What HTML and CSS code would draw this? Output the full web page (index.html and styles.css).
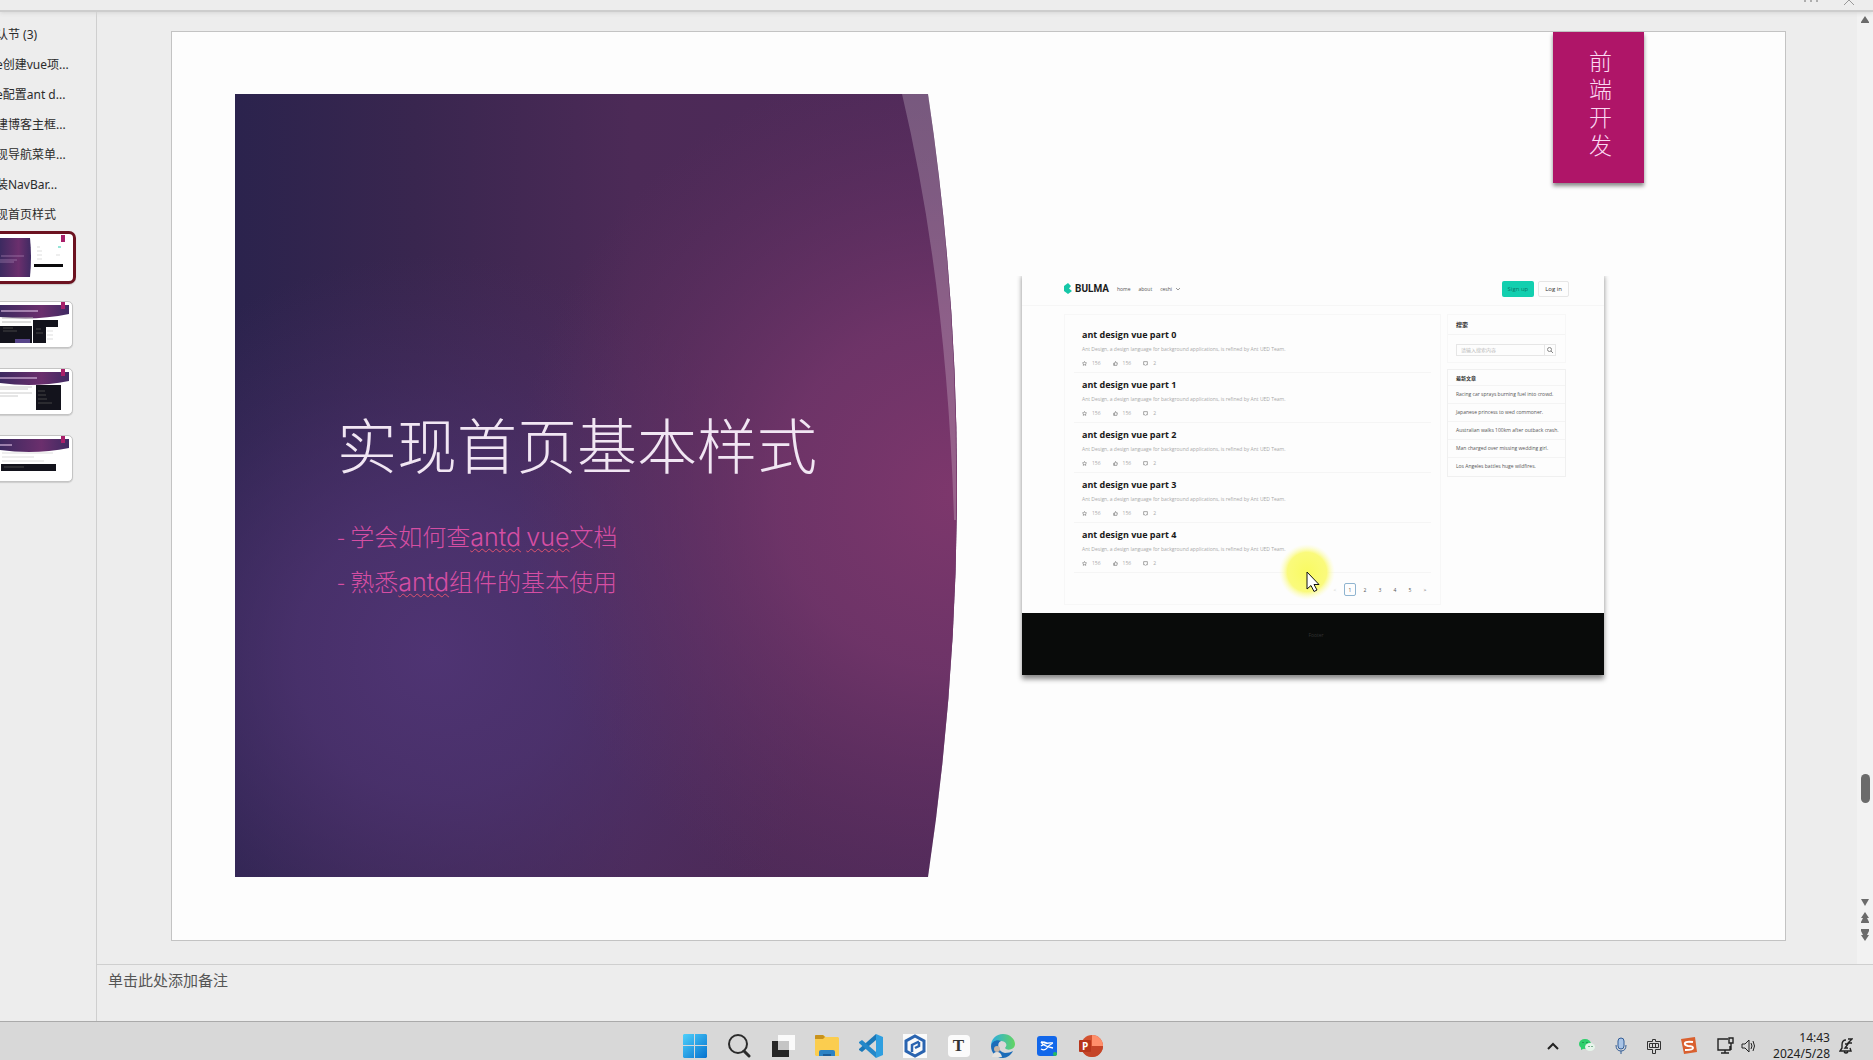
FILE: index.html
```html
<!DOCTYPE html>
<html lang="zh-CN">
<head>
  <meta charset="UTF-8" />
  <meta name="viewport" content="width=device-width, initial-scale=1.0"/>
  <title>实现首页基本样式</title>
  <link rel="stylesheet" href="styles.css">
</head>
<body>
  <svg class="defs" width="0" height="0">
    <defs>
      <symbol id="star" viewBox="0 0 16 16"><path d="M8 1.500l2 4.200 4.500.6-3.300 3.200.8 4.500L8 11.900 4 14l.8-4.500L1.500 6.300 6 5.700z" fill="none" stroke="#777" stroke-width="2"/></symbol>
      <symbol id="like" viewBox="0 0 16 16"><path d="M2 7h3v7H2zM5 7l3-5.500c2 0 2 2 1.300 4.500H14l-1.500 8H5" fill="none" stroke="#777" stroke-width="2"/></symbol>
      <symbol id="msg" viewBox="0 0 16 16"><path d="M2 2h12v10h-4l-2 2-2-2H2z" fill="none" stroke="#777" stroke-width="2"/></symbol>
      <linearGradient id="bar" x1="0" x2="1"><stop offset="0" stop-color="#3c2a60"/><stop offset=".6" stop-color="#6b2f6d"/><stop offset="1" stop-color="#3f2a62"/></linearGradient>
    </defs>
  </svg>

  <div class="titlebar">
    <button class="tool" aria-label="更多"><svg width="16" height="4" viewBox="0 0 16 4" fill="#999"><circle cx="2" cy="1" r="1"/><circle cx="8" cy="1" r="1"/><circle cx="14" cy="1" r="1"/></svg></button>
    <button class="tool" aria-label="关闭"><svg width="12" height="12" viewBox="0 0 12 12" stroke="#999"><path d="M1 1l10 10M11 1L1 11"/></svg></button>
  </div>

  <div class="workspace">
    <aside class="sidebar">
      <ul class="sections">
        <li>认节 (3)</li>
        <li>e创建vue项...</li>
        <li>e配置ant d...</li>
        <li>建博客主框...</li>
        <li>现导航菜单...</li>
        <li>装NavBar...</li>
        <li>现首页样式</li>
      </ul>
      <button class="thumb selected" aria-label="实现首页基本样式">
        <svg width="73" height="47" viewBox="0 0 73 47">
          <path d="M0 4h30q2 19 0 39H0z" fill="url(#bar)"/>
          <path d="M1 22h23M0 26h17M0 28h14" stroke="#b48fc0" stroke-opacity=".6"/>
          <rect x="34" y="30" width="29" height="3" fill="#0a0a0c"/>
          <path d="M37 13h3M37 17h5M37 21h5M37 25h5M56 21h4" stroke="#ddd"/>
          <path d="M58 13h3" stroke="#2cc9b0"/>
          <rect x="61" y="1" width="4" height="7" fill="#a8206a"/>
        </svg>
      </button>
      <button class="thumb" aria-label="幻灯片 2">
        <svg width="72" height="45" viewBox="0 0 72 45">
          <path d="M0 3h69v9q-34 7-69 3z" fill="url(#bar)"/>
          <path d="M1 9h37" stroke="#d5b8dc" stroke-opacity=".6" stroke-width="2"/>
          <path d="M2 16h31M2 20h29" stroke="#bbb"/>
          <path d="M0 24h32v17H0zM33 18h25v7H46v16H33z" fill="#13131c"/>
          <path d="M3 26h10M3 29h14M36 27h5M36 31h7" stroke="#444"/>
          <rect x="15" y="37" width="15" height="4" fill="#57458a"/>
          <path d="M47 29h6M47 33h6M47 37h6" stroke="#ddd"/>
          <rect x="61" y="0" width="4" height="7" fill="#a8206a"/>
        </svg>
      </button>
      <button class="thumb" aria-label="幻灯片 3">
        <svg width="72" height="45" viewBox="0 0 72 45">
          <path d="M0 3h69v9q-34 7-69 2z" fill="url(#bar)"/>
          <path d="M0 9h37" stroke="#d5b8dc" stroke-opacity=".6" stroke-width="2"/>
          <path d="M0 18h32M0 20h28M0 24h32M0 27h18" stroke="#ccc"/>
          <rect x="36" y="16" width="25" height="25" fill="#13131c"/>
          <path d="M38 22h7M38 26h8M38 30h9M38 34h14" stroke="#444"/>
          <rect x="61" y="0" width="4" height="7" fill="#a8206a"/>
        </svg>
      </button>
      <button class="thumb" aria-label="幻灯片 4">
        <svg width="72" height="45" viewBox="0 0 72 45">
          <path d="M0 3h69v9q-34 7-69 2z" fill="url(#bar)"/>
          <path d="M0 9h12" stroke="#d5b8dc" stroke-opacity=".6" stroke-width="2"/>
          <path d="M2 17h51M2 21h32M2 25h42" stroke="#ddd"/>
          <rect x="1" y="28" width="55" height="7" fill="#13131c"/>
          <path d="M4 31h20" stroke="#444"/>
          <rect x="61" y="0" width="4" height="7" fill="#a8206a"/>
        </svg>
      </button>
    </aside>

    <main class="editor">
      <div class="stage">
        <div class="slide">
          <section class="cover">
            <svg class="cover-bg" viewBox="0 0 722 783" preserveAspectRatio="none">
              <defs>
                <linearGradient id="base" x1="0" y1="0" x2="1" y2="0">
                  <stop offset="0" stop-color="#2b234d"/><stop offset=".25" stop-color="#39264f"/>
                  <stop offset=".55" stop-color="#4c2a57"/><stop offset="1" stop-color="#502a5a"/>
                </linearGradient>
                <radialGradient id="pink" gradientUnits="userSpaceOnUse" cx="720" cy="400" r="440">
                  <stop offset="0" stop-color="#7d376c"/><stop offset=".4" stop-color="#75366b" stop-opacity=".8"/><stop offset=".7" stop-color="#6c3366" stop-opacity=".4"/><stop offset="1" stop-color="#63305f" stop-opacity="0"/>
                </radialGradient>
                <radialGradient id="violet" gradientUnits="userSpaceOnUse" cx="200" cy="560" r="400">
                  <stop offset="0" stop-color="#4f3473"/><stop offset=".35" stop-color="#4d3371" stop-opacity=".8"/><stop offset=".7" stop-color="#4d3270" stop-opacity=".3"/><stop offset="1" stop-color="#4a2f68" stop-opacity="0"/>
                </radialGradient>
              </defs>
              <path d="M0 0H693Q751 391 693 783H0z" fill="url(#base)"/>
              <path d="M0 0H693Q751 391 693 783H0z" fill="url(#violet)"/>
              <path d="M0 0H693Q751 391 693 783H0z" fill="url(#pink)"/>
              <path d="M667 0H693Q724 213 721 426H719Q712 190 667 0z" fill="#fff" fill-opacity=".22"/>
            </svg>
            <h1>实现首页基本样式</h1>
            <p>- 学会如何查<span class="latin typo">antd</span> <span class="latin typo">vue</span>文档</p>
            <p>- 熟悉<span class="latin typo">antd</span>组件的基本使用</p>
          </section>

          <section class="preview">
            <nav class="navbar">
              <a class="brand" href="#"><svg width="8" height="11" viewBox="0 0 8 11"><path d="M4 0l3 3-2 2.500L8 8l-4 3-4-3V3z" fill="#16c7a8"/></svg>BULMA</a>
              <a href="#">home</a>
              <a href="#">about</a>
              <a href="#">ceshi <svg width="6" height="4" viewBox="0 0 6 4" fill="none" stroke="#999"><path d="M1 1l2 2 2-2"/></svg></a>
              <button class="signup">Sign up</button>
              <button class="login">Log in</button>
            </nav>
            <div class="content">
              <div class="posts">
                <article><h2>ant design vue part 0</h2><p>Ant Design, a design language for background applications, is refined by Ant UED Team.</p>
                  <div class="stats"><span><svg><use href="#star"/></svg>156</span><span><svg><use href="#like"/></svg>156</span><span><svg><use href="#msg"/></svg>2</span></div></article>
                <article><h2>ant design vue part 1</h2><p>Ant Design, a design language for background applications, is refined by Ant UED Team.</p>
                  <div class="stats"><span><svg><use href="#star"/></svg>156</span><span><svg><use href="#like"/></svg>156</span><span><svg><use href="#msg"/></svg>2</span></div></article>
                <article><h2>ant design vue part 2</h2><p>Ant Design, a design language for background applications, is refined by Ant UED Team.</p>
                  <div class="stats"><span><svg><use href="#star"/></svg>156</span><span><svg><use href="#like"/></svg>156</span><span><svg><use href="#msg"/></svg>2</span></div></article>
                <article><h2>ant design vue part 3</h2><p>Ant Design, a design language for background applications, is refined by Ant UED Team.</p>
                  <div class="stats"><span><svg><use href="#star"/></svg>156</span><span><svg><use href="#like"/></svg>156</span><span><svg><use href="#msg"/></svg>2</span></div></article>
                <article><h2>ant design vue part 4</h2><p>Ant Design, a design language for background applications, is refined by Ant UED Team.</p>
                  <div class="stats"><span><svg><use href="#star"/></svg>156</span><span><svg><use href="#like"/></svg>156</span><span><svg><use href="#msg"/></svg>2</span></div></article>
                <div class="pager">
                  <button class="off">&lt;</button><button class="current">1</button><button>2</button><button>3</button><button>4</button><button>5</button><button>&gt;</button>
                </div>
              </div>
              <div class="side">
                <div class="card search">
                  <h3><label for="q">搜索</label></h3>
                  <div class="search-box">
                    <input id="q" type="text" placeholder="请输入搜索内容">
                    <button aria-label="搜索"><svg width="6" height="6" viewBox="0 0 6 6" fill="none" stroke="#888"><circle cx="2.500" cy="2.500" r="2"/><path d="M4 4l2 2"/></svg></button>
                  </div>
                </div>
                <div class="card latest">
                  <h3>最新文章</h3>
                  <ul>
                    <li>Racing car sprays burning fuel into crowd.</li>
                    <li>Japanese princess to wed commoner.</li>
                    <li>Australian walks 100km after outback crash.</li>
                    <li>Man charged over missing wedding girl.</li>
                    <li>Los Angeles battles huge wildfires.</li>
                  </ul>
                </div>
              </div>
            </div>
            <footer>Footer</footer>
            <svg class="pointer" width="56" height="56" viewBox="0 0 56 56">
              <defs><radialGradient id="glow"><stop offset="0" stop-color="#f9fa62"/><stop offset=".7" stop-color="#fafa7c"/><stop offset="1" stop-color="#fdfdc8" stop-opacity="0"/></radialGradient></defs>
              <circle cx="28" cy="28" r="28" fill="url(#glow)"/>
              <path d="M28 28v17l4-3.500 3 6 3-1.500-3-5.500h5z" fill="#fff" stroke="#111"/>
            </svg>
          </section>

          <div class="badge"><span>前</span><span>端</span><span>开</span><span>发</span></div>
        </div>

        <div class="scrollbar">
          <svg width="12" height="8" viewBox="0 0 12 8"><path d="M6 0l4 6v1H2V6z" fill="#6b6b6b"/></svg>
          <span class="handle"></span>
          <div class="arrows">
            <svg width="10" height="8" viewBox="0 0 10 8"><path d="M1 0h8L5 7z" fill="#6b6b6b"/></svg>
            <svg width="10" height="12" viewBox="0 0 10 12"><path d="M5 0l4 6H7l2 4v1H1v-1l2-4H1z" fill="#6b6b6b"/></svg>
            <svg width="10" height="12" viewBox="0 0 10 12"><path d="M5 12l4-6H7l2-4V0H1v2l2 4H1z" fill="#6b6b6b"/></svg>
          </div>
        </div>
      </div>
      <div class="notes">单击此处添加备注</div>
    </main>
  </div>

  <div class="taskbar">
    <div class="apps">
      <button aria-label="开始"><svg viewBox="0 0 24 24"><defs><linearGradient id="win" x2="1" y2="1"><stop stop-color="#4fd0fb"/><stop offset="1" stop-color="#0672cf"/></linearGradient></defs><path d="M1 0h10v11H0V1zM12 0h11l1 1v10H12zM0 12h11v12H1l-1-1zM12 12h12v11l-1 1H12z" fill="url(#win)"/></svg></button>
      <button aria-label="搜索"><svg viewBox="0 0 24 24" fill="none" stroke="#2b2b2b" stroke-width="2"><circle cx="11" cy="10" r="9"/><path d="M17 17l5 5" stroke-width="3" stroke-linecap="round"/></svg></button>
      <button aria-label="任务视图"><svg viewBox="0 0 24 24"><path d="M1 7h17v16H1z" fill="#262626"/><path d="M7 1h17v15H7z" fill="#fafafa"/><path d="M7 7h11v9H7z" fill="#c5c5c5"/></svg></button>
      <button aria-label="文件资源管理器"><svg viewBox="0 0 24 24"><path d="M0 2q0-1 1-1h7l3 2h12l1 1v18H1l-1-1z" fill="#fbcd4f"/><path d="M0 2q0-1 1-1h7l2 2-2 2H0z" fill="#c8921d"/><path d="M4 22v-4q0-2 2-2h12q2 0 2 2v4z" fill="#2b82c4"/><path d="M8 20h8v2H8z" fill="#1a5c98"/></svg></button>
      <button aria-label="VS Code"><svg viewBox="0 0 24 24"><path d="M17 0l7 3v18l-7 3z" fill="#2f9fe0"/><path d="M17 0v6L3 18l-3-2v-1z" fill="#1b78b8"/><path d="M17 24v-6L3 6 0 8v1z" fill="#2488c9"/></svg></button>
      <button aria-label="Blog"><svg viewBox="0 0 24 24"><path d="M0 0h24v24H0z" fill="#fafafa"/><path d="M12 2l9 5v10l-9 5-9-5V7z" fill="none" stroke="#2a64b0" stroke-width="3"/><path d="M9 18v-7l7-3.500M12 14l4-2V8" fill="none" stroke="#2a64b0" stroke-width="2.500"/></svg></button>
      <button aria-label="Typora"><span class="typora">T</span></button>
      <button aria-label="Edge"><svg viewBox="0 0 24 24"><defs><linearGradient id="edge" x2="1"><stop stop-color="#2cabe3"/><stop offset="1" stop-color="#63d561"/></linearGradient></defs><path d="M0 12C0 5 5 0 12 0s12 5 12 10c0 6-8 7-10 4 3-3 1-7-4-7S1 10 0 12z" fill="url(#edge)"/><path d="M0 12c1-5 6-7 10-5-5 2-3 11 4 12 3 0 6-1 8-2-2 4-6 7-10 7C5 24 0 19 0 12z" fill="#1c6cb9"/><circle cx="6" cy="15" r="3" fill="#c7b5a6"/><path d="M1 23q1-5 5-5t5 5z" fill="#e6e3df"/></svg></button>
      <button aria-label="腾讯会议"><svg viewBox="0 0 24 24"><rect x="2" y="2" width="20" height="20" rx="3" fill="#1267ea"/><path d="M6 8q2 4 12 6M6 12q5-4 12-3M6 15q4 2 6-1t6-5M6 8q4 0 6 1" fill="none" stroke="#fff" stroke-width="1.300"/><circle cx="20" cy="20" r="2" fill="#25b864"/></svg></button>
      <button aria-label="PowerPoint"><svg viewBox="0 0 24 24"><circle cx="13" cy="12" r="11" fill="#d35230"/><path d="M13 1a11 11 0 0 1 11 11H13z" fill="#ff8f6b"/><path d="M2 12h22a11 11 0 0 1-22 0z" fill="#c54528"/><rect y="6" width="12" height="12" rx="1" fill="#b7361b"/><text class="ppt" x="3" y="16">P</text></svg></button>
    </div>
    <div class="tray">
      <svg width="12" height="24" viewBox="0 0 12 24" fill="none" stroke="#222" stroke-width="2"><path d="M1 15l5-5 5 5"/></svg>
      <svg width="16" height="24" viewBox="0 0 16 24"><ellipse cx="6" cy="10" rx="6" ry="5" fill="#2ecf6c"/><path d="M2 12v4l4-2z" fill="#2ecf6c"/><ellipse cx="11" cy="13" rx="5" ry="4" fill="#e6f5ea"/><path d="M4 8v1M8 8v1M10 12v1M13 12v1" stroke="#176b38"/></svg>
      <svg width="12" height="24" viewBox="0 0 12 24" fill="none" stroke="#315c96"><rect x="3" y="4" width="6" height="11" rx="3" fill="#a9c4e6"/><path d="M1 11q0 6 5 6t5-6M6 17v3"/></svg>
      <svg width="14" height="24" viewBox="0 0 14 24" fill="none" stroke="#333"><path d="M5.500 5.500h3v2h5v8h-5v4h-3v-4h-5v-8h5z"/><path d="M2.500 9.500h9v4h-9zM5.500 9.500v4M8.500 9.500v4"/></svg>
      <svg width="16" height="24" viewBox="0 0 16 24"><path d="M0 5l14-2 2 15-13 2z" fill="#d9602f"/><path d="M12 8q-7-1-8 1t3 3q5 0 5 2t-8 2" fill="none" stroke="#fff" stroke-width="2"/></svg>
      <div class="pair">
        <svg width="17" height="24" viewBox="0 0 17 24" fill="none" stroke="#222"><path d="M11 5H1v11h12v-4M4 19h8M8 16v3M12 4h4v5h-4zM14 9v7" stroke-width="1.400"/></svg>
        <svg width="16" height="24" viewBox="0 0 16 24" fill="none" stroke="#222"><path d="M1 10h3l4-4v12l-4-4H1zM10 9q2 3 0 6M12 7q3 5 0 10"/></svg>
      </div>
      <div class="clock"><span>14:43</span><span>2024/5/28</span></div>
      <svg class="bell" width="14" height="24" viewBox="0 0 14 24" fill="none" stroke="#222" stroke-width="1.400"><path d="M7 6Q3 6 3 11v3l-2 3h11l-1-3M5 18q2 2 4 0M9 5h4l-4 4h4M6 10h3l-3 4h3"/></svg>
    </div>
  </div>
</body>
</html>
```

FILE: styles.css
```css
* {
  box-sizing: border-box;
}
body {
  margin: 0;
  height: 100vh;
  display: flex;
  flex-direction: column;
  overflow: hidden;
  background: #ededed;
  color: #333;
  font-family: "Noto Sans", "Noto Sans CJK SC", sans-serif;
  font-size: 12px;
}
h1, h2, h3, p, ul {
  margin: 0;
  padding: 0;
}
ul {
  list-style: none;
}
button {
  border: none;
  background: none;
  padding: 0;
  font: inherit;
  color: inherit;
}
a {
  color: inherit;
  text-decoration: none;
}
svg {
  display: block;
  flex-shrink: 0;
}
.defs {
  position: absolute;
}

/* top strip */
.titlebar {
  flex: 0 0 12px;
  min-height: 0;
  display: flex;
  justify-content: flex-end;
  align-items: flex-end;
  gap: 24px;
  padding: 0 18px 4px 0;
  border-bottom: 2px solid #cdcdcd;
  box-shadow: 0 1px 4px #d5d5d5;
  z-index: 1;
}
.tool:first-child {
  align-self: flex-start;
}

.workspace {
  flex: 1;
  min-height: 0;
  display: flex;
}

/* slide list */
.sidebar {
  flex: 0 0 97px;
  padding-top: 8px;
  border-right: 1px solid #cfcfcf;
  overflow: hidden;
}
.sections {
  margin-left: -4px;
}
.sections li {
  line-height: 30px;
  white-space: nowrap;
  color: #2b2b2b;
}
.thumb {
  display: block;
  width: 81px;
  height: 47px;
  margin: 0 0 20px -8px;
  padding-left: 7px;
  background: #fff;
  border: 1px solid #c4c4c4;
  border-radius: 5px;
  overflow: hidden;
  box-shadow: 0 1px 1px #ccc;
}
.thumb.selected {
  width: 84px;
  height: 53px;
  margin: 1px 0 17px -8px;
  padding-left: 5px;
  border: 3px solid #6c1220;
  border-radius: 7px;
}

/* slide area */
.editor {
  flex: 1;
  display: flex;
  flex-direction: column;
}
.stage {
  flex: 1;
  display: flex;
  justify-content: space-between;
  padding-left: 74px;
}
.slide {
  position: relative;
  flex: 1;
  margin: 19px 71px 23px 0;
  display: grid;
  grid-template-columns: 63fr 722fr 65fr 582fr 181fr;
  grid-template-rows: 62fr 783fr 63fr;
  background: #fdfdfd;
  border: 1px solid #c3c3c3;
}
.cover {
  position: relative;
  grid-area: 2 / 2;
  padding: 304px 0 0 102px;
}
.cover-bg {
  position: absolute;
  inset: 0;
  width: 100%;
  height: 100%;
}
.cover h1 {
  position: relative;
  margin-bottom: 25px;
  font: 300 60px/90px "Noto Sans CJK SC", sans-serif;
  color: #f1e6f3;
}
.cover p {
  position: relative;
  font: 300 24px/45px "Noto Sans CJK SC", sans-serif;
  color: #d54ea3;
}
.latin {
  font-family: Inter, sans-serif;
  font-size: 25px;
  line-height: 1;
}
.typo {
  text-decoration: underline wavy #e0526e 1px;
  text-underline-offset: 2px;
}
.badge {
  position: absolute;
  top: 0;
  right: 141px;
  width: 91px;
  height: 151px;
  padding: 14px 0 0 4px;
  display: flex;
  flex-direction: column;
  align-items: center;
  background: #af1568;
  color: #fbd9f3;
  font: 300 23px/28px "Noto Sans CJK SC", sans-serif;
  box-shadow: 0 3px 4px #888;
}

/* blog page shown on the slide */
.preview {
  position: relative;
  grid-area: 2 / 4;
  align-self: start;
  margin-top: 178px;
  background: #fdfdfd;
  box-shadow: 0 4px 5px #888;
  clip-path: inset(4px -12px -14px -12px);
  font: 5px/8px "Open Sans", "Noto Sans CJK SC", sans-serif;
  color: #555;
}
.navbar {
  height: 34px;
  display: flex;
  align-items: center;
  gap: 8px;
  padding: 0 35px 0 42px;
  border-bottom: 1px solid #f6f6f6;
}
.navbar a {
  display: flex;
  align-items: center;
  gap: 3px;
}
.navbar .brand {
  font: bold 10px/12px Roboto, sans-serif;
  color: #1c1c1c;
}
.navbar button {
  height: 16px;
  padding: 0 6px;
  border-radius: 2px;
  font-size: 6px;
}
.navbar .signup {
  margin-left: auto;
  background: #13cfaf;
  color: #0b7a68;
}
.navbar .login {
  margin-left: -4px;
  border: 1px solid #e6e6e6;
  color: #333;
}
.content {
  display: flex;
  justify-content: space-between;
  padding: 8px 38px 8px 42px;
}
.posts {
  flex: 0 0 377px;
  padding: 8px 9px;
  border: 1px solid #f7f7f7;
}
.posts article {
  height: 50px;
  padding: 5px 8px 0;
  border-bottom: 1px solid #f5f5f5;
}
.posts h2 {
  font: bold 9px/14px "Open Sans", sans-serif;
  color: #1a1a1a;
}
.posts p {
  margin: 3px 0 6px;
  color: #aaa;
}
.stats {
  display: flex;
  gap: 12px;
  color: #aaa;
}
.stats span {
  display: flex;
  align-items: center;
  gap: 5px;
}
.stats svg {
  width: 5px;
  height: 5px;
}
.pager {
  display: flex;
  justify-content: flex-end;
  gap: 3px;
  padding-top: 10px;
}
.pager button {
  width: 12px;
  height: 13px;
}
.pager .off {
  color: #ccc;
}
.pager .current {
  border: 1px solid #8fb4d0;
  border-radius: 2px;
}
.side {
  flex: 0 0 119px;
}
.card {
  border: 1px solid #f0f0f0;
}
.card h3 {
  padding-left: 8px;
  font: bold 6px/19px "Noto Sans CJK SC", sans-serif;
  color: #333;
  border-bottom: 1px solid #f4f4f4;
}
.search {
  height: 49px;
  margin-bottom: 6px;
  border-color: #f7f7f7;
}
.search-box {
  display: flex;
  height: 12px;
  margin: 9px 9px 0 8px;
  border: 1px solid #e6e6e6;
}
.search-box input {
  flex: 1;
  min-width: 0;
  border: none;
  padding: 0 4px;
  background: none;
  font: inherit;
}
.search-box input::placeholder {
  color: #bbb;
}
.search-box button {
  width: 11px;
  padding-left: 2px;
  border-left: 1px solid #e6e6e6;
}
.latest h3 {
  line-height: 15px;
  font-size: 5px;
}
.latest li {
  height: 18px;
  padding-left: 8px;
  line-height: 16px;
  white-space: nowrap;
  border-bottom: 1px solid #f4f4f4;
}
.latest li:last-child {
  border-bottom: none;
}
.preview footer {
  height: 62px;
  padding: 18px 0 0 6px;
  background: #090b0a;
  color: #333;
  text-align: center;
}
.pointer {
  position: absolute;
  left: 257px;
  top: 272px;
}

.scrollbar {
  width: 16px;
  display: flex;
  flex-direction: column;
  align-items: center;
  padding: 4px 0 23px;
  background: #f2f2f2;
}
.handle {
  width: 9px;
  height: 29px;
  margin-top: 750px;
  border-radius: 5px;
  background: #6b6b6b;
}
.arrows {
  margin-top: auto;
  display: grid;
  gap: 5px;
}
.notes {
  flex: 0 0 57px;
  padding: 4px 11px;
  border-top: 1px solid #cfcfcf;
  font-size: 15px;
  line-height: 22px;
  color: #555;
}

/* taskbar */
.taskbar {
  flex: 0 0 39px;
  min-height: 0;
  height: 39px;
  display: flex;
  justify-content: space-between;
  align-items: center;
  padding: 10px 20px 0 calc(50% - 254px);
  background: #d8d8d8;
  border-top: 1px solid #aaa;
}
.apps {
  display: flex;
  gap: 20px;
}
.apps button, .apps svg {
  width: 24px;
  height: 24px;
}
.typora {
  display: block;
  width: 22px;
  height: 22px;
  margin: 1px;
  border-radius: 4px;
  background: #fbfbfb;
  color: #333;
  font: bold 17px/22px "Liberation Serif", serif;
}
.ppt {
  font: bold 10px "Open Sans", sans-serif;
  fill: #fff;
}
.tray {
  display: flex;
  align-items: center;
  gap: 20px;
}
.pair {
  display: flex;
  gap: 7px;
}
.clock {
  display: flex;
  flex-direction: column;
  align-items: flex-end;
  margin-left: -4px;
  line-height: 16px;
  color: #222;
}
.bell {
  margin-left: -11px;
}
```
